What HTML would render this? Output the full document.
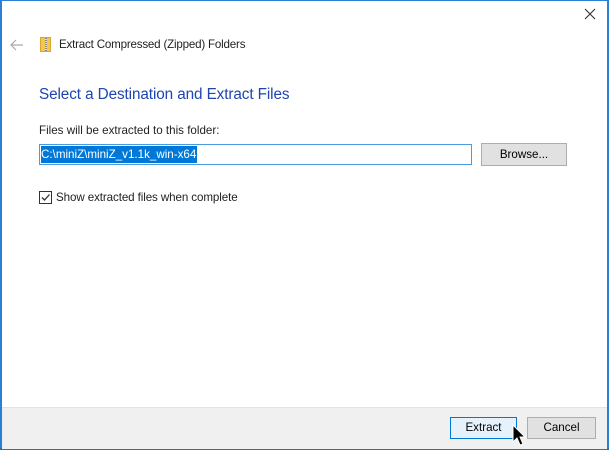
<!DOCTYPE html>
<html><head><style>
body{margin:0;width:609px;height:450px;overflow:hidden;background:#fff;font-family:"Liberation Sans",sans-serif;font-size:11.6px;color:#000;position:relative}
.a{position:absolute}
.btn{position:absolute;box-sizing:border-box;background:#e1e1e1;border:1px solid #adadad;text-align:center;font-size:11.6px;line-height:20px}
</style></head><body>
<div class="a" style="left:0;top:0;width:609px;height:1px;background:#2b7fd4"></div>
<div class="a" style="left:0;top:0;width:2px;height:450px;background:#2b7fd4"></div>
<div class="a" style="left:607px;top:0;width:2px;height:450px;background:#2b7fd4"></div>
<div class="a" style="left:0;top:448px;width:609px;height:2px;background:#2b6ebd"></div>
<svg class="a" style="left:584px;top:8px" width="12" height="12"><path d="M1 1L11 11M11 1L1 11" stroke="#333" stroke-width="1.1"/></svg>
<svg class="a" style="left:10px;top:39px" width="14" height="12"><path d="M1 6H13M6 1L1 6L6 11" stroke="#aaa" stroke-width="1.2" fill="none"/></svg>
<div class="a" style="left:40px;top:37px;width:11px;height:15px;background:#f3c552;border:1px solid #d9a830;box-sizing:border-box"></div>
<div class="a" style="left:45px;top:38px;width:2px;height:13px;background:repeating-linear-gradient(#888 0 1px,#ddd 1px 2px)"></div>
<div class="a" style="left:59px;top:38px;color:#222;letter-spacing:-0.2px">Extract Compressed (Zipped) Folders</div>
<div class="a" style="left:39px;top:86px;font-size:15.3px;color:#1e45b0;letter-spacing:-0.1px">Select a Destination and Extract Files</div>
<div class="a" style="left:39px;top:124px;color:#222">Files will be extracted to this folder:</div>
<div class="a" style="left:39px;top:144px;width:433px;height:21px;box-sizing:border-box;border:1px solid #4a9be0"></div>
<div class="a" style="left:41px;top:146px;height:17px;line-height:17px;background:#0078d7;color:#fff;padding-right:1px">C:\miniZ\miniZ_v1.1k_win-x64</div>
<div class="btn" style="left:481px;top:143px;width:86px;height:23px;line-height:21px">Browse...</div>
<div class="a" style="left:39px;top:191px;width:13px;height:13px;box-sizing:border-box;border:1px solid #333"></div>
<svg class="a" style="left:40px;top:192px" width="11" height="11"><path d="M2 5.5L4.5 8L9.5 2.5" stroke="#333" stroke-width="1.3" fill="none"/></svg>
<div class="a" style="left:56px;top:191px;color:#222;letter-spacing:-0.1px">Show extracted files when complete</div>
<div class="a" style="left:2px;top:407px;width:605px;height:41px;background:#f0f0f0;border-top:1px solid #e3e3e3"></div>
<div class="btn" style="left:450px;top:417px;width:67px;height:22px;background:#e5f1fb;border:1px solid #0078d7">Extract</div>
<div class="btn" style="left:527px;top:417px;width:69px;height:22px">Cancel</div>
<svg class="a" style="left:512px;top:424px" width="14" height="24"><path d="M1 1V18L5 14L8 21L11 20L8 13H13Z" fill="#000" stroke="#fff" stroke-width="1"/></svg>
</body></html>
